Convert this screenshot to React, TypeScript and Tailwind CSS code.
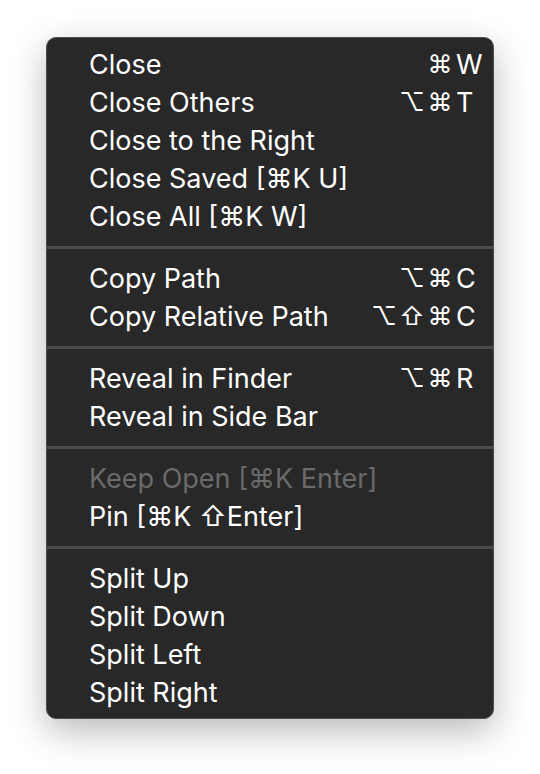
import React from 'react';

type Item = {
  label: string;
  mods?: string[];
  keyChar?: string;
  disabled?: boolean;
};

// Groups of menu entries, separated by dividers
const groups: Item[][] = [
  [
    { label: 'Close', mods: ['⌘'], keyChar: 'W' },
    { label: 'Close Others', mods: ['⌥', '⌘'], keyChar: 'T' },
    { label: 'Close to the Right' },
    { label: 'Close Saved [⌘K U]' },
    { label: 'Close All [⌘K W]' },
  ],
  [
    { label: 'Copy Path', mods: ['⌥', '⌘'], keyChar: 'C' },
    { label: 'Copy Relative Path', mods: ['⌥', '⇧', '⌘'], keyChar: 'C' },
  ],
  [
    { label: 'Reveal in Finder', mods: ['⌥', '⌘'], keyChar: 'R' },
    { label: 'Reveal in Side Bar' },
  ],
  [
    { label: 'Keep Open [⌘K Enter]', disabled: true },
    { label: 'Pin [⌘K ⇧Enter]' },
  ],
  [
    { label: 'Split Up' },
    { label: 'Split Down' },
    { label: 'Split Left' },
    { label: 'Split Right' },
  ],
];

const MenuRow: React.FC<{ item: Item }> = ({ item }) => (
  <div
    className={`flex h-[38px] items-center pl-[42px] pr-[5px] pt-[2px] ${
      item.disabled ? 'text-[#6a6a6a]' : 'text-white'
    }`}
  >
    <span className="flex-1 whitespace-nowrap">{item.label}</span>
    {item.mods?.map((m, i) => (
      <span key={i} className="w-[28px] text-center text-[25px]">
        {m}
      </span>
    ))}
    {item.keyChar && <span className="w-[34px] pl-[2px]">{item.keyChar}</span>}
  </div>
);

export default function App() {
  return (
    <div className="min-h-screen bg-white pl-[46px] pt-[37px]">
      <div
        className="w-[448px] rounded-[10px] border border-[#4e4e4e] bg-[#282828] py-[7px] text-[27px] shadow-[0_12px_36px_rgba(0,0,0,0.28)]"
        style={{ fontFamily: 'Inter, "DejaVu Sans", sans-serif' }}
      >
        {groups.map((group, gi) => (
          <React.Fragment key={gi}>
            {gi > 0 && (
              <div className="pb-[10px] pt-[11px]">
                <div className="h-[3px] bg-[#4a4a4a]" />
              </div>
            )}
            {group.map((item) => (
              <MenuRow key={item.label} item={item} />
            ))}
          </React.Fragment>
        ))}
      </div>
    </div>
  );
}
